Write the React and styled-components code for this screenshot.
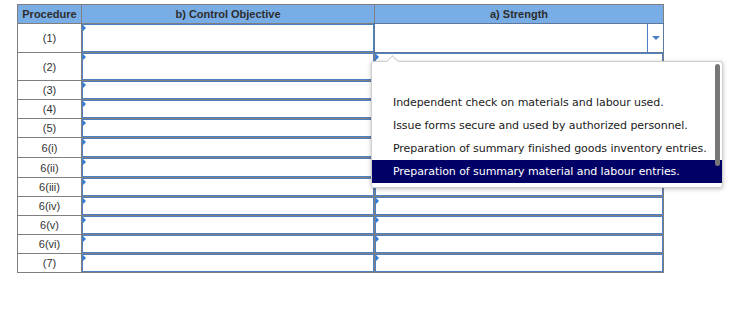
import React from 'react';
import styled, { createGlobalStyle } from 'styled-components';

const GlobalStyle = createGlobalStyle`
  body {
    margin: 0;
    background: #ffffff;
  }
`;

const Page = styled.div`
  padding: 4px 0 0 17px;
`;

const Grid = styled.div`
  display: grid;
  grid-template-columns: 64px 293px 289px;
  grid-template-rows: ${({ $rows }) => $rows};
  width: max-content;
  border-top: 1px solid #7f7f7f;
  border-left: 1px solid #7f7f7f;
  font-family: 'Liberation Sans', Arial, sans-serif;
  font-size: 11px;
  color: #333333;
`;

const Cell = styled.div`
  box-sizing: border-box;
  border-right: 1px solid #7f7f7f;
  border-bottom: 1px solid #7f7f7f;
  position: relative;
`;

const HeadCell = styled(Cell)`
  display: flex;
  align-items: center;
  justify-content: center;
  background: #79ade6;
  font-weight: bold;
  color: #2d2d2d;
`;

const LabelCell = styled(Cell)`
  display: flex;
  align-items: center;
  justify-content: center;
`;

const Field = styled.div`
  box-sizing: border-box;
  position: relative;
  height: 100%;
  border: 1px solid #4e80c2;
  background: #ffffff;

  &:before {
    content: '';
    position: absolute;
    top: 0;
    left: 0;
    border-left: 3px solid #2f7bd8;
    border-top: 3px solid transparent;
    border-bottom: 3px solid transparent;
  }
`;

const SelectCell = styled(Cell)`
  display: flex;
  z-index: 2;

  &:after {
    content: '';
    position: absolute;
    top: -1px;
    left: -1px;
    right: -1px;
    bottom: -1px;
    border: 1px dotted #3d70b8;
    pointer-events: none;
  }
`;

const SelectValue = styled.div`
  flex: 1;
`;

const ArrowBox = styled.div`
  width: 15px;
  border-left: 1px solid #4e80c2;
  display: flex;
  align-items: center;
  justify-content: center;

  &:before {
    content: '';
    border-top: 4px solid #4a7fc4;
    border-left: 4px solid transparent;
    border-right: 4px solid transparent;
  }
`;

const Popup = styled.div`
  position: absolute;
  left: -4px;
  top: 37px;
  width: 352px;
  box-sizing: border-box;
  padding: 6px 0 4px;
  background: #ffffff;
  border: 1px solid #cfcfcf;
  border-radius: 3px;
  box-shadow: 0 1px 4px rgba(0, 0, 0, 0.25);
  font-family: 'DejaVu Sans', Verdana, sans-serif;
  font-size: 11px;
  letter-spacing: -0.07px;
  color: #1a1a1a;

  &:before {
    content: '';
    position: absolute;
    top: -5px;
    left: 16px;
    width: 8px;
    height: 8px;
    background: #ffffff;
    border-top: 1px solid #cfcfcf;
    border-left: 1px solid #cfcfcf;
    transform: rotate(45deg);
  }
`;

const Option = styled.div`
  height: 23px;
  line-height: 23px;
  padding-left: 21px;
  white-space: nowrap;
  background: ${({ $selected }) => ($selected ? '#000066' : 'transparent')};
  color: ${({ $selected }) => ($selected ? '#ffffff' : 'inherit')};
`;

const Thumb = styled.div`
  position: absolute;
  top: 2px;
  right: 2px;
  width: 5px;
  height: 102px;
  border-radius: 3px;
  background: #777777;
`;

const rows = [
  { label: '(1)', h: 29 },
  { label: '(2)', h: 28 },
  { label: '(3)', h: 19 },
  { label: '(4)', h: 19 },
  { label: '(5)', h: 19 },
  { label: '6(i)', h: 20 },
  { label: '6(ii)', h: 20 },
  { label: '6(iii)', h: 19 },
  { label: '6(iv)', h: 19 },
  { label: '6(v)', h: 19 },
  { label: '6(vi)', h: 19 },
  { label: '(7)', h: 19 },
];

const options = [
  '',
  'Independent check on materials and labour used.',
  'Issue forms secure and used by authorized personnel.',
  'Preparation of summary finished goods inventory entries.',
  'Preparation of summary material and labour entries.',
];

const App = () => {
  const template = ['19px', ...rows.map((r) => `${r.h}px`)].join(' ');

  return (
    <Page>
      <GlobalStyle />
      <Grid $rows={template}>
        <HeadCell>Procedure</HeadCell>
        <HeadCell>b) Control Objective</HeadCell>
        <HeadCell>a) Strength</HeadCell>

        {rows.map((row, i) => (
          <React.Fragment key={row.label}>
            <LabelCell>{row.label}</LabelCell>
            <Cell>
              <Field />
            </Cell>
            {i === 0 ? (
              <SelectCell>
                <SelectValue />
                <ArrowBox />
                <Popup>
                  {options.map((opt, j) => (
                    <Option key={j} $selected={j === options.length - 1}>
                      {opt}
                    </Option>
                  ))}
                  <Thumb />
                </Popup>
              </SelectCell>
            ) : (
              <Cell>
                <Field />
              </Cell>
            )}
          </React.Fragment>
        ))}
      </Grid>
    </Page>
  );
};

export default App;
